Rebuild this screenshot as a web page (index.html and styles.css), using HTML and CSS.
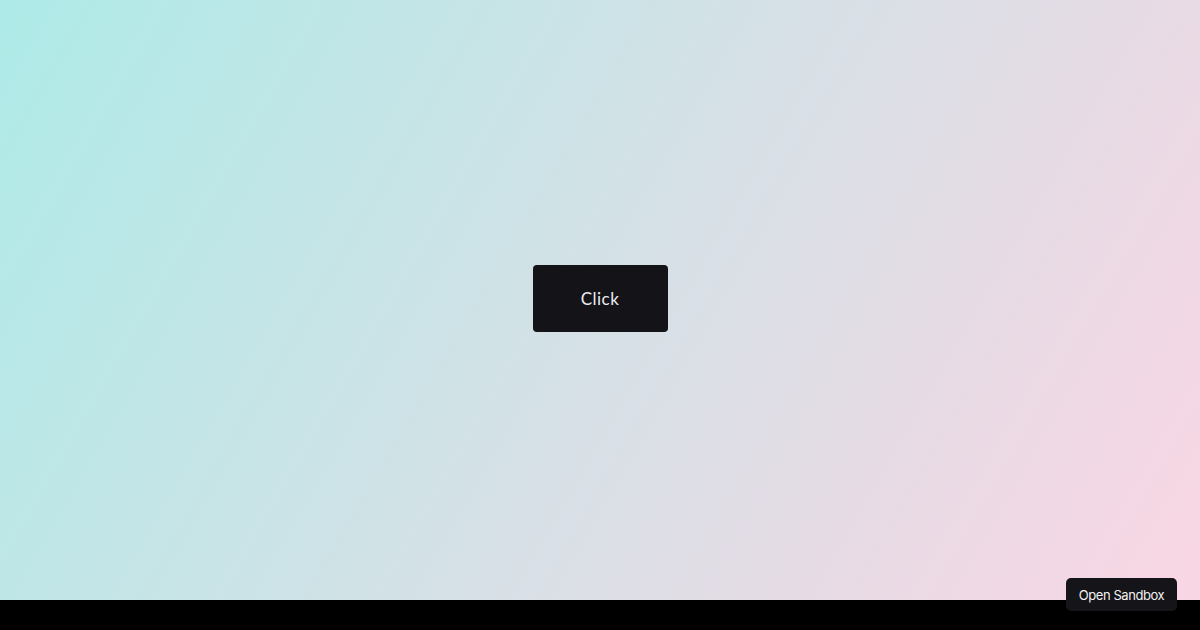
FILE: index.html
```html
<!DOCTYPE html>
<html>
<head>
<meta charset="utf-8">
<link rel="stylesheet" href="styles.css">
</head>
<body>
<main class="stage">
  <button class="click-btn">Click</button>
</main>
<footer class="bar"></footer>
<a class="sandbox-btn">Open Sandbox</a>
</body>
</html>
```
FILE: styles.css
```css
html, body {
  margin: 0;
  padding: 0;
  width: 1200px;
  height: 630px;
  overflow: hidden;
}
body {
  display: flex;
  flex-direction: column;
  background: #000;
}
.stage {
  height: 600px;
  display: flex;
  align-items: center;
  justify-content: center;
  background: linear-gradient(120deg, #aeebe8 0%, #fad6e4 100%);
}
.click-btn {
  width: 135px;
  height: 67px;
  margin-top: -3px;
  border: none;
  border-radius: 4px;
  background: #131318;
  color: #ecebf0;
  font-family: Lato, "Open Sans", sans-serif;
  font-weight: 400;
  font-size: 17px;
  letter-spacing: 0.5px;
  cursor: pointer;
}
.bar {
  height: 30px;
  background: #000;
}
.sandbox-btn {
  position: absolute;
  left: 1066px;
  top: 578px;
  width: 111px;
  height: 33px;
  box-sizing: border-box;
  display: flex;
  align-items: center;
  justify-content: center;
  background: #151419;
  border-radius: 5px;
  color: #f2f2f2;
  font-family: Inter, "Liberation Sans", sans-serif;
  font-size: 13px;
  letter-spacing: -0.45px;
}
```
